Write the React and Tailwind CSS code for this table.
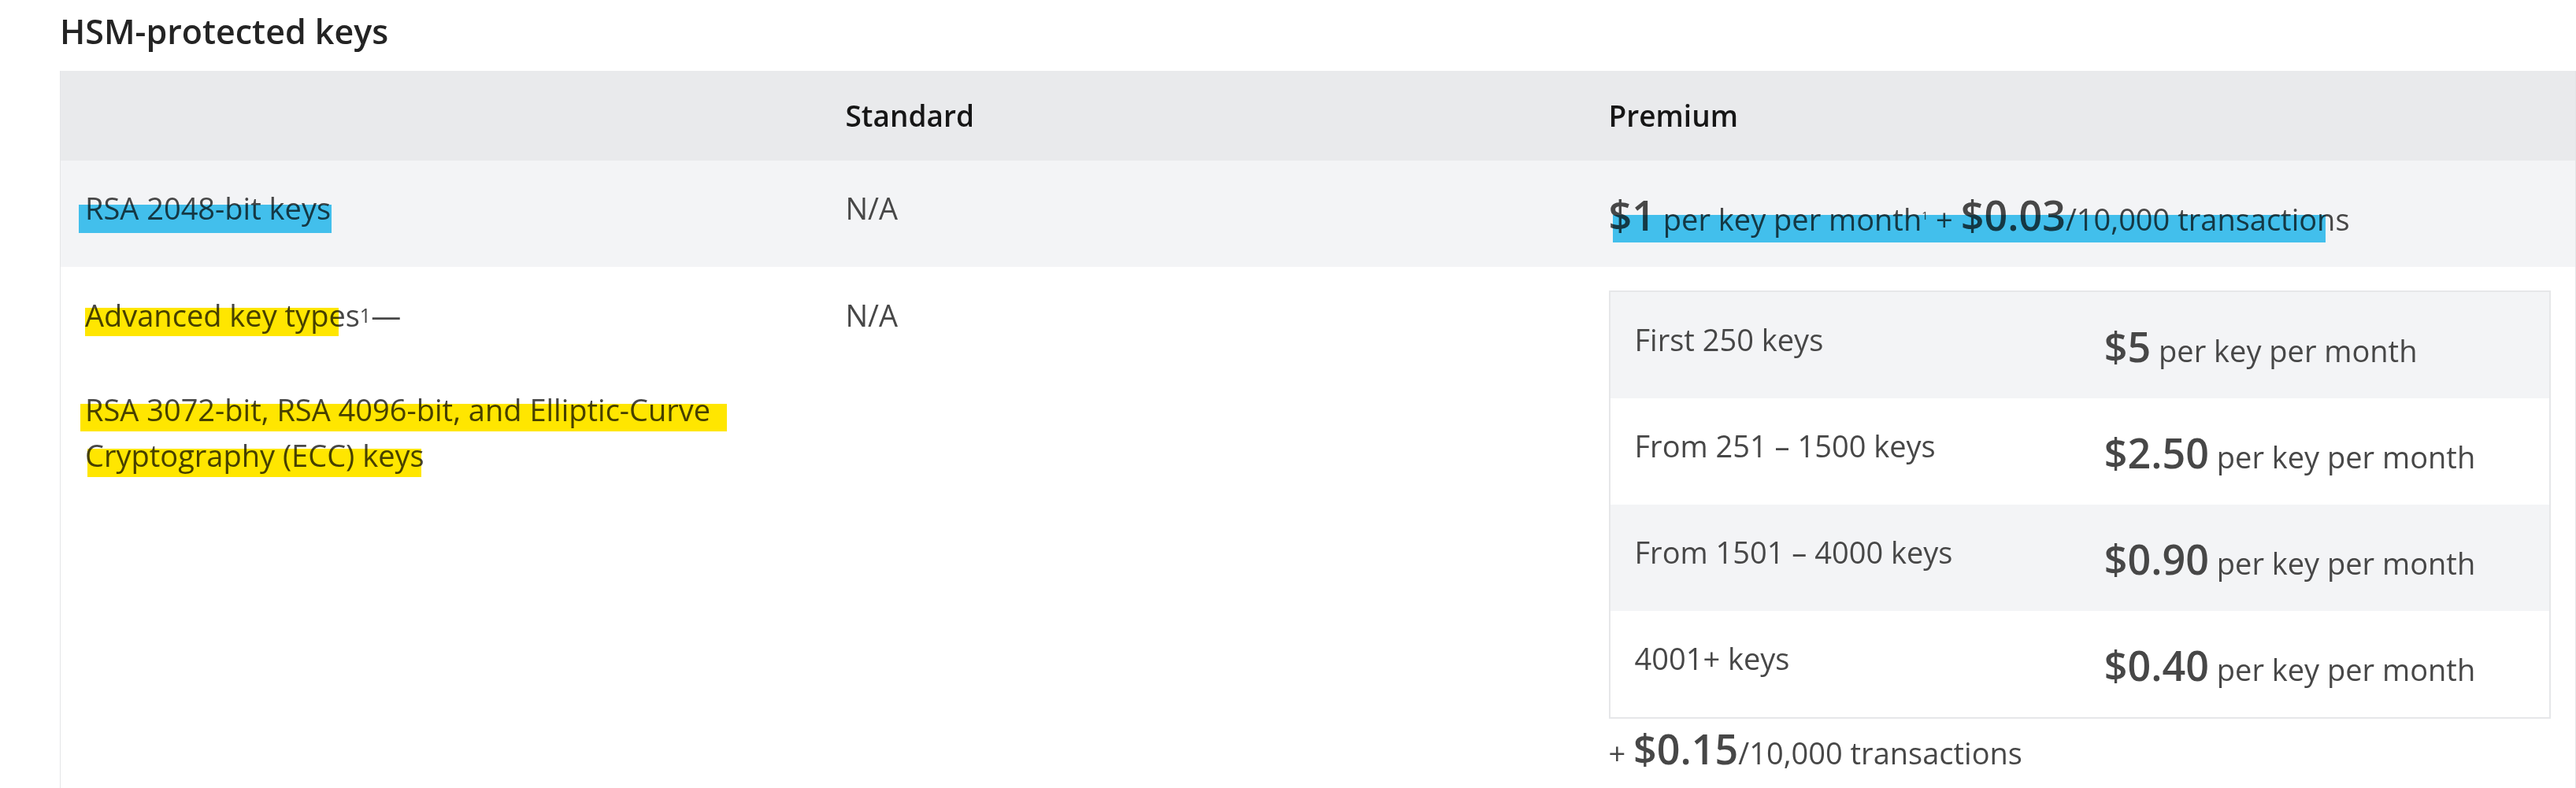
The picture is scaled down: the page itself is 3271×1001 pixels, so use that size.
function Mark({ box, children }) {
  return (
    <span className="relative">
      {children}
      <span className={`pointer-events-none absolute mix-blend-multiply ${box}`} />
    </span>
  );
}

function Price({ children }) {
  return <span className="text-[52px] leading-[75px] font-semibold">{children}</span>;
}

const tiers = [
  { label: "First 250 keys", price: "$5", bg: "bg-[#f3f4f6]" },
  { label: "From 251 – 1500 keys", price: "$2.50", bg: "bg-white" },
  { label: "From 1501 – 4000 keys", price: "$0.90", bg: "bg-[#f3f4f6]" },
  { label: "4001+ keys", price: "$0.40", bg: "bg-white" },
];

export default function App() {
  return (
    <div className="min-h-screen bg-white pl-[76px] font-['Open_Sans','Noto_Sans',sans-serif] text-[38px] leading-[58px] text-[#474747]">
      <h2 className="pt-[11px] pb-[22px] text-[43px] leading-[57px] font-semibold text-[#242424]">
        HSM-protected keys
      </h2>

      <table className="w-full table-fixed border-x border-[#e4e5e7]">
        <thead>
          <tr className="bg-[#e9eaec] text-left text-[37px] text-[#161616]">
            <th className="w-[966px] px-[31px] py-[28px] font-semibold"></th>
            <th className="w-[969px] px-[31px] py-[28px] font-semibold">Standard</th>
            <th className="px-[31px] py-[28px] font-semibold">Premium</th>
          </tr>
        </thead>
        <tbody>
          <tr className="bg-[#f3f4f6]">
            <td className="px-[31px] pt-[31px] pb-[29px] align-top">
              <Mark box="left-[-8px] top-[22px] h-[36px] w-[321px] bg-[#45c8f5]">RSA 2048-bit keys</Mark>
            </td>
            <td className="px-[31px] pt-[31px] pb-[29px] align-top">N/A</td>
            <td className="px-[31px] pt-[31px] pb-[29px] align-top whitespace-nowrap">
              <Mark box="left-[5px] top-[21px] h-[35px] w-[905px] bg-[#45c8f5]">
                <Price>$1</Price> per key per month
                <sup className="top-[-14px] text-[14px]">1</sup> + <Price>$0.03</Price>/10,000 transactions
              </Mark>
            </td>
          </tr>

          <tr className="bg-white">
            <td className="px-[31px] pt-[32px] pb-[29px] align-top">
              <p>
                <Mark box="left-0 top-[17px] h-[36px] w-[322px] bg-[#ffe600]">Advanced key types</Mark>
                <sup className="top-[-5px] text-[25px]">1</sup>—
              </p>
              <p className="mt-[62px]">
                <Mark box="left-[-6px] top-[19px] h-[35px] w-[821px] bg-[#ffe600]">
                  RSA 3072-bit, RSA 4096-bit, and Elliptic-Curve
                </Mark>
                <br />
                <Mark box="left-[3px] top-[18px] h-[36px] w-[424px] bg-[#ffe600]">Cryptography (ECC) keys</Mark>
              </p>
            </td>
            <td className="px-[31px] pt-[32px] pb-[29px] align-top">N/A</td>
            <td className="px-[31px] pt-[30px] pb-[29px] align-top">
              <table className="w-full table-fixed border-2 border-[#e6e7e9]">
                <tbody>
                  {tiers.map((t) => (
                    <tr key={t.label} className={t.bg}>
                      <td className="px-[31px] pt-[31px] pb-[29px] align-top">{t.label}</td>
                      <td className="px-[31px] pt-[31px] pb-[29px] align-top">
                        <Price>{t.price}</Price> per key per month
                      </td>
                    </tr>
                  ))}
                </tbody>
              </table>
              <p>
                + <Price>$0.15</Price>/10,000 transactions
              </p>
            </td>
          </tr>
        </tbody>
      </table>
    </div>
  );
}
